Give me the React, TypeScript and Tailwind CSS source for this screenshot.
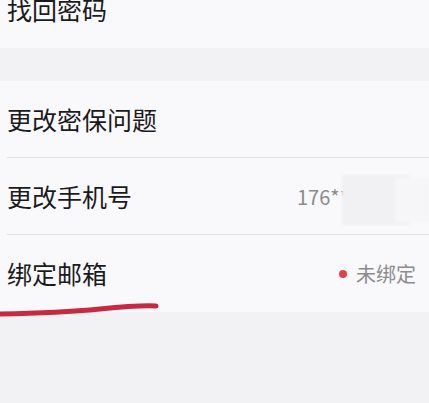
import React from "react";

const font = { fontFamily: '"Noto Sans CJK SC", "Noto Sans", sans-serif' };

function Row({ label, right, divider }: { label: string; right?: React.ReactNode; divider?: boolean }) {
  return (
    <div className="relative flex h-[77px] items-center pl-[7px] pr-[13px]">
      <span className="text-[25px] leading-none text-[#1b1b1b]">{label}</span>
      <div className="ml-auto flex items-center">{right}</div>
      {divider && <div className="absolute bottom-0 left-[7px] right-0 h-px bg-[#e2e1e5]" />}
    </div>
  );
}

export default function App() {
  return (
    <div className="h-[403px] w-[429px] overflow-hidden bg-[#f2f1f4]" style={font}>
      <div className="mt-[-29px] bg-[#f9f8fb]">
        <Row label="找回密码" />
      </div>
      <div className="mt-[33px] bg-[#f9f8fb]">
        <Row label="更改密保问题" divider />
        <div className="relative">
          <Row
            label="更改手机号"
            divider
            right={<span className="mr-[67px] text-[20px] leading-none text-[#8c8c8c]">176**</span>}
          />
          <div className="absolute left-[342px] top-[17px] h-[50px] w-[68px] rounded-[3px] bg-[#f1f0f3] blur-[1px]" />
          <div className="absolute left-[395px] top-[20px] h-[44px] w-[34px] bg-[#f6f5f8] blur-[1px]" />
        </div>
        <div className="relative">
          <Row
            label="绑定邮箱"
            right={
              <div className="flex items-center gap-[9px]">
                <span className="h-[8px] w-[8px] rounded-full bg-[#d9434a]" />
                <span className="text-[20px] leading-none text-[#8c8c8c]">未绑定</span>
              </div>
            }
          />
          <svg className="absolute left-0 top-[64px]" width="170" height="20" viewBox="0 0 170 20">
            <path d="M0 15 Q 60 14 100 10 T 156 7" fill="none" stroke="#c62a43" strokeWidth="5" strokeLinecap="round" />
          </svg>
        </div>
      </div>
    </div>
  );
}
